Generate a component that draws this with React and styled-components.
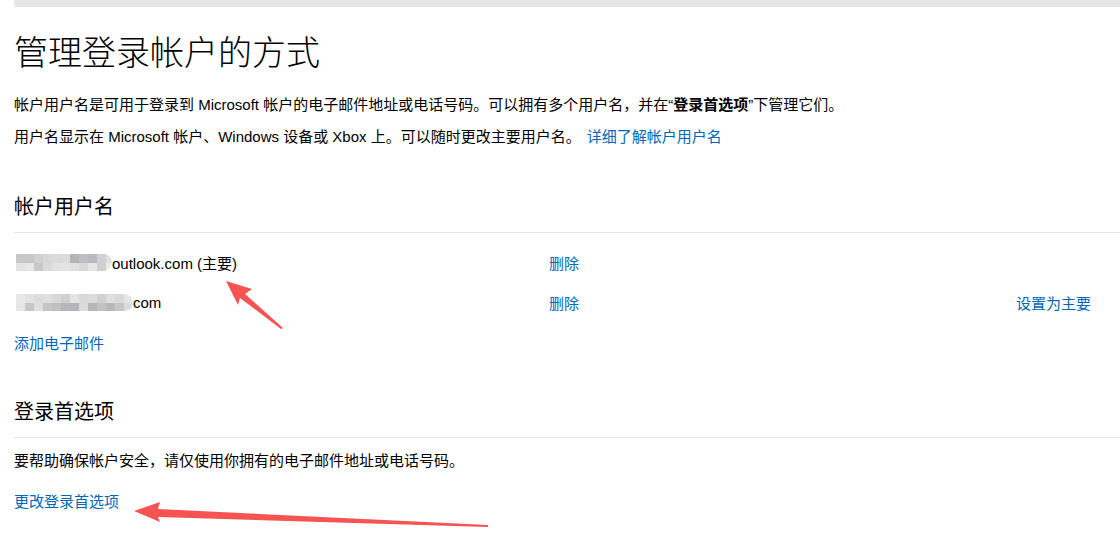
import React from "react";
import styled, { createGlobalStyle } from "styled-components";

const GlobalStyle = createGlobalStyle`
  html, body {
    margin: 0;
    padding: 0;
    background: #fff;
  }
  body {
    font-family: "Segoe UI", "Liberation Sans", "Noto Sans CJK SC", sans-serif;
    color: #000;
    -webkit-font-smoothing: antialiased;
  }
`;

const Page = styled.div`
  position: relative;
  width: 1120px;
  height: 545px;
  overflow: hidden;
  padding-left: 14px;
  box-sizing: border-box;
`;

const TopBar = styled.div`
  height: 7px;
  background: #e6e6e6;
`;

const Title = styled.h1`
  margin: 26px 0 0;
  font-size: 34px;
  line-height: 40px;
  font-weight: 300;
  letter-spacing: 0;
`;

const Intro = styled.div`
  margin-top: 16px;
`;

const Para = styled.p`
  margin: 0;
  font-size: 15px;
  line-height: 32px;
  white-space: nowrap;

  strong {
    font-weight: 700;
  }
`;

const Link = styled.a`
  color: #0067b8;
  text-decoration: none;
  font-size: 15px;
  cursor: pointer;
  margin-left: ${(p) => (p.$gap ? "6px" : "0")};
`;

const SectionTitle = styled.h2`
  margin: ${(p) => p.$top}px 0 0;
  font-size: 20px;
  line-height: 28px;
  font-weight: 400;
`;

const Divider = styled.div`
  margin-top: 11px;
  height: 1px;
  background: #e5e5e5;
`;

const List = styled.div`
  margin-top: 9px;
`;

const Row = styled.div`
  display: grid;
  grid-template-columns: 535px 1fr auto;
  align-items: center;
  height: 40px;
  padding-right: 29px;
  font-size: 15px;
`;

const Email = styled.div`
  display: flex;
  align-items: center;
`;

const Mosaic = styled.div`
  display: grid;
  grid-template-columns: repeat(${(p) => p.$cols}, 9px);
  grid-auto-rows: 9px;
  width: ${(p) => p.$w}px;
  height: 17px;
  margin-left: 2px;
  border-radius: 0 9px 9px 0;
  overflow: hidden;
  filter: blur(0.6px);
`;

const Tile = styled.span`
  background: ${(p) => p.$c};
`;

const AddRow = styled.div`
  height: 40px;
  display: flex;
  align-items: center;
`;

const Note = styled.p`
  margin: 13px 0 0;
  font-size: 15px;
  line-height: 20px;
`;

const LinkLine = styled.div`
  margin-top: 19px;
  height: 20px;
  display: flex;
  align-items: center;
`;

const Annotations = styled.svg`
  position: absolute;
  left: 0;
  top: 0;
  pointer-events: none;
`;

const mosaicA = [
  "#c9c6c6", "#c6c8cc", "#d0d0d2", "#d6d9db", "#dadada", "#dcdcdc",
  "#b6b4b6", "#c0c0c2", "#b5bac2", "#d0d0d4", "#e0e0e0",
  "#e6e3e3", "#e8e8e8", "#c8c8c8", "#dadada", "#e2e2e2", "#e4e4e4",
  "#e0e0e0", "#d8d8d8", "#e6e6e6", "#cfcfcf", "#ececec",
];

const mosaicB = [
  "#e8e6e6", "#e2e2e2", "#dcdcdc", "#e0e0e0", "#d8d8d8", "#d0d0d2", "#e6e2e0",
  "#d6d8dc", "#dcdcde", "#d2d0d0", "#e0e0e2", "#dadada", "#e6e6e6",
  "#e6e4e4", "#c6c6c8", "#dedede", "#c4c4c4", "#c0c0c0", "#b6b6ba", "#b2b4b8",
  "#d8dadc", "#bcb6b2", "#c0c2c4", "#b8b8bc", "#c8c8c8", "#dcdcdc",
];

function Blur({ colors, cols, width }) {
  return (
    <Mosaic $cols={cols} $w={width}>
      {colors.map((c, i) => (
        <Tile key={i} $c={c} />
      ))}
    </Mosaic>
  );
}

export default function App() {
  return (
    <>
      <GlobalStyle />
      <Page>
        <TopBar />
        <Title>管理登录帐户的方式</Title>
        <Intro>
          <Para>
            帐户用户名是可用于登录到 Microsoft 帐户的电子邮件地址或电话号码。可以拥有多个用户名，并在“<strong>登录首选项</strong>”下管理它们。
          </Para>
          <Para>
            用户名显示在 Microsoft 帐户、Windows 设备或 Xbox 上。可以随时更改主要用户名。
            <Link $gap>详细了解帐户用户名</Link>
          </Para>
        </Intro>

        <SectionTitle $top={40}>帐户用户名</SectionTitle>
        <Divider />
        <List>
          <Row>
            <Email>
              <Blur colors={mosaicA} cols={11} width={96} />
              <span>outlook.com (主要)</span>
            </Email>
            <Link>删除</Link>
            <span />
          </Row>
          <Row>
            <Email>
              <Blur colors={mosaicB} cols={13} width={117} />
              <span>com</span>
            </Email>
            <Link>删除</Link>
            <Link>设置为主要</Link>
          </Row>
          <AddRow>
            <Link>添加电子邮件</Link>
          </AddRow>
        </List>

        <SectionTitle $top={36}>登录首选项</SectionTitle>
        <Divider />
        <Note>要帮助确保帐户安全，请仅使用你拥有的电子邮件地址或电话号码。</Note>
        <LinkLine>
          <Link>更改登录首选项</Link>
        </LinkLine>

        <Annotations width="1120" height="545" viewBox="0 0 1120 545">
          <g fill="#f65353">
            {/* arrow pointing at the primary address */}
            <polygon points="226,281 252,289 245,294 283,328 281,329 240,298 238,305" />
            {/* arrow pointing at the sign-in preferences link */}
            <polygon points="134,511 160,502 158,509 488,525 488,527 158,517 160,522" />
          </g>
        </Annotations>
      </Page>
    </>
  );
}
